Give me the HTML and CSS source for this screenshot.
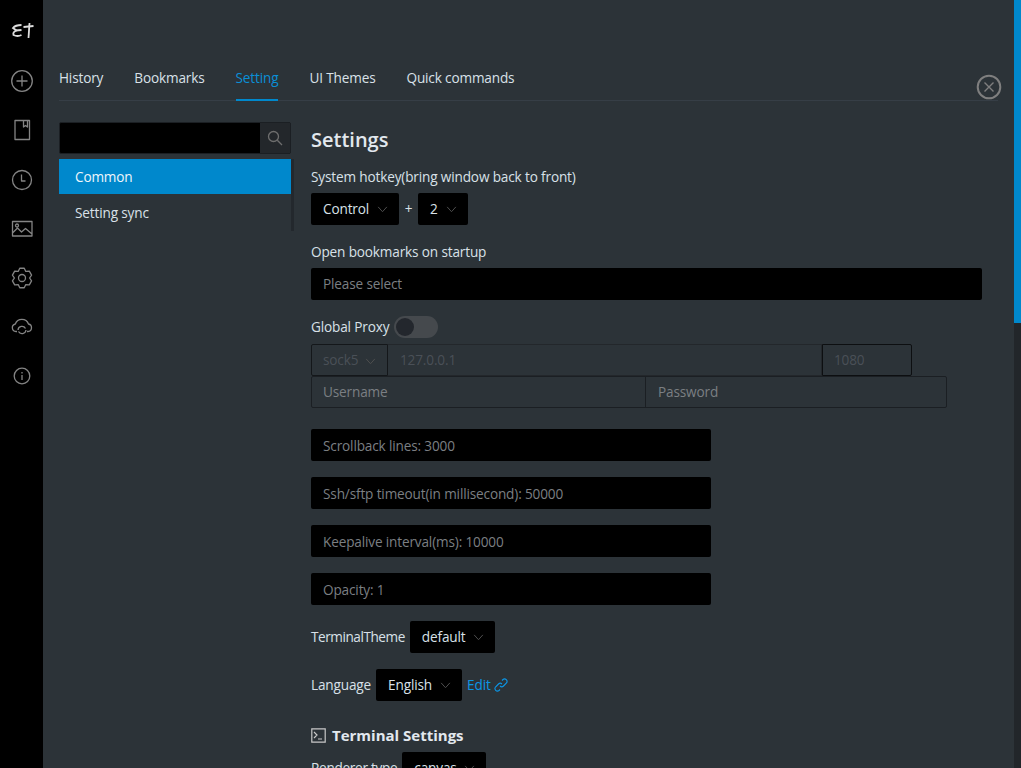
FILE: index.html
```html
<!DOCTYPE html>
<html lang="en">
<head>
<meta charset="utf-8">
<title>Settings</title>
<link rel="stylesheet" href="styles.css">
</head>
<body>
<div class="app">
  <nav class="rail">
    <div class="logo">
      <svg width="24" height="20" viewBox="0 1 24 20" fill="none" stroke="#ddd" stroke-width="1.800"><path d="M11.500 4Q5.500 4 3 7L6.500 9.500Q2.500 11 3.500 14Q7.500 16 11.500 14"/><path d="M5.500 9.500 11.500 9"/><path d="M13.500 6 23.500 5"/><path d="M19.500 2 18.500 17"/></svg>
    </div>
    <div class="rail-item"><svg width="24" height="24" viewBox="0 0 24 24" class="ico"><circle cx="12" cy="12" r="10.300"/><path d="M12 6.500v11M6.500 12h11"/></svg></div>
    <div class="rail-item"><svg width="18" height="22" viewBox="0 0 18 22" class="ico"><path d="M2 1.500h14.500v19H2zM10.500 1.500v6.500l2-1.500 2 1.500V1.500"/></svg></div>
    <div class="rail-item clock"><svg width="22" height="22" viewBox="0 0 22 22" class="ico"><circle cx="11" cy="11" r="9.500"/><path d="M10.500 5.500v6.500h4"/></svg></div>
    <div class="rail-item"><svg width="22" height="18" viewBox="0 0 22 18" class="ico"><path d="M1.500 1.500h19.500v14.500H1.500zM1.500 13l5-5 4 4 4-3.500 6.500 5.500"/><circle cx="6" cy="5.500" r="1.500"/></svg></div>
    <div class="rail-item"><svg width="22" height="22" viewBox="0 0 22 22" class="ico"><circle cx="11" cy="11" r="3.500"/><path d="M8.750 1.260H13.250L14.800 4.420 18.310 4.180 20.560 8.080 18.600 11 20.560 13.920 18.310 17.820 14.800 17.580 13.250 20.740H8.750L7.200 17.580 3.690 17.820 1.440 13.920 3.400 11 1.440 8.080 3.690 4.180 7.200 4.420Z"/></svg></div>
    <div class="rail-item"><svg width="22" height="18" viewBox="0 0 22 18" class="ico"><path d="M6 13.500H5a3.800 3.800 0 0 1-.7-7.500A7 7 0 0 1 17.500 6a3.800 3.800 0 0 1-.5 7.500h-1"/><path d="M7 12a4 4 0 0 1 7.500-1.500M15 12a4 4 0 0 1-7.500 1.500"/></svg></div>
    <div class="rail-item"><svg width="18" height="18" viewBox="0 0 18 18" class="ico"><circle cx="9" cy="9" r="7.800"/><path d="M9 8v5M9 5v1.500"/></svg></div>
  </nav>

  <main class="main">
    <header class="tabs">
      <span class="tab">History</span>
      <span class="tab">Bookmarks</span>
      <span class="tab active">Setting</span>
      <span class="tab">UI Themes</span>
      <span class="tab">Quick commands</span>
    </header>
    <svg class="close" width="26" height="26" viewBox="0 0 26 26"><circle cx="13" cy="13" r="11.300"/><path class="close-x" d="m8.500 8.500 9 9M17.500 8.500l-9 9"/></svg>

    <div class="body">
      <aside class="side">
        <div class="search">
          <span class="search-input"></span>
          <span class="search-btn"><svg width="16" height="16" viewBox="0 0 16 16"><circle cx="6.500" cy="6.500" r="5"/><path d="m10.300 10.300 4.700 4.700"/></svg></span>
        </div>
        <ul class="menu">
          <li class="menu-item selected">Common</li>
          <li class="menu-item">Setting sync</li>
        </ul>
      </aside>

      <section class="content">
        <h2 class="title">Settings</h2>
        <div class="label">System hotkey(bring window back to front)</div>
        <div class="row hotkey">
          <span class="select w88">Control<svg class="chev" viewBox="0 0 12 8"><path d="m1 1 5 5.500L11 1"/></svg></span>
          <span class="plus">+</span>
          <span class="select w50">2<svg class="chev" viewBox="0 0 12 8"><path d="m1 1 5 5.500L11 1"/></svg></span>
        </div>
        <div class="label bm">Open bookmarks on startup</div>
        <div class="field full placeholder">Please select</div>

        <div class="proxy-head">
          <span>Global Proxy</span>
          <span class="switch"><span class="knob"></span></span>
        </div>
        <div class="proxy-line">
          <span class="pcell proto">sock5<svg class="chev" viewBox="0 0 12 8"><path d="m1 1 5 5.500L11 1"/></svg></span>
          <span class="pcell host">127.0.0.1</span>
          <span class="pcell port">1080</span>
        </div>
        <div class="proxy-auth">
          <span class="acell user">Username</span>
          <span class="acell pass">Password</span>
        </div>

        <div class="stack">
          <div class="field num">Scrollback lines: 3000</div>
          <div class="field num">Ssh/sftp timeout(in millisecond): 50000</div>
          <div class="field num">Keepalive interval(ms): 10000</div>
          <div class="field num">Opacity: 1</div>
        </div>

        <div class="row inline">
          <span class="tight">TerminalTheme</span>
          <span class="select w85">default<svg class="chev" viewBox="0 0 12 8"><path d="m1 1 5 5.500L11 1"/></svg></span>
        </div>
        <div class="row inline">
          <span>Language</span>
          <span class="select w86">English<svg class="chev" viewBox="0 0 12 8"><path d="m1 1 5 5.500L11 1"/></svg></span>
          <span class="edit">Edit <svg width="14" height="14" viewBox="0 0 14 14"><path d="M6 8a2.500 2.500 0 0 0 3.500 0l3-3a2.500 2.500 0 0 0-3.500-3.500L8 2.500"/><path d="M8 6a2.500 2.500 0 0 0-3.500 0l-3 3A2.500 2.500 0 0 0 5 12.500l1-1"/></svg></span>
        </div>

        <h3 class="sub"><svg width="15" height="15" viewBox="0 0 15 15"><path d="M.8.800h13.400v13.400H.8zM3 4l3 3-3 3M7 11h4"/></svg>Terminal Settings</h3>
        <div class="row inline last">
          <span class="tight2">Renderer type</span>
          <span class="select w84">canvas<svg class="chev" viewBox="0 0 12 8"><path d="m1 1 5 5.500L11 1"/></svg></span>
        </div>
      </section>
    </div>
  </main>

  <div class="scrollbar"><div class="thumb"></div></div>
</div>
</body>
</html>
```
FILE: styles.css
```css
* { box-sizing: border-box; }
html, body { margin: 0; height: 100%; overflow: hidden; }
body {
  font: 13.600px/22px "Open Sans", "Noto Sans", sans-serif;
  letter-spacing: -0.150px;
  color: #d9e1e8;
  background: #2c3338;
}
.app { display: flex; height: 768px; overflow: hidden; }

.rail {
  width: 43px;
  flex: none;
  background: #000;
  padding-top: 7.200px;
  display: flex;
  flex-direction: column;
}
.logo, .rail-item {
  height: 49.200px;
  display: flex;
  align-items: center;
  justify-content: center;
  flex: none;
}
.clock svg { margin-top: 2px; }
.ico { fill: none; stroke: #848484; stroke-width: 1.300; stroke-linejoin: round; }

.main { flex: 1; min-width: 0; position: relative; padding: 62px 16px 0; }
.tabs {
  display: flex;
  gap: 31px;
  height: 39px;
  border-bottom: 1px solid #363e46;
}
.tab { height: 39px; padding-top: 5px; color: #d9e1e8; }
.tab.active { color: #0a8fd6; border-bottom: 2px solid #0088cc; }
.close { position: absolute; left: 933px; top: 74px; fill: none; stroke: #7f7f7f; stroke-width: 2; }
.close .close-x { stroke-width: 1.400; }

.body { display: flex; margin-top: 21px; }
.side { width: 232px; flex: none; margin-right: 20px; }
.search {
  display: flex;
  height: 32px;
  background: #000;
  border: 1px solid #1b1f23;
  border-radius: 2px;
}
.search-input { flex: 1; }
.search-btn {
  width: 30px;
  background: #23272b;
  display: flex;
  align-items: center;
  justify-content: center;
}
.search-btn svg { fill: none; stroke: #6e6e6e; stroke-width: 1.300; }
.menu {
  list-style: none;
  margin: 5px 0 0;
  padding: 0;
  width: 235px;
  border-right: 3px solid #23282d;
  height: 72px;
}
.menu-item { height: 37px; line-height: 38px; padding-left: 16px; }
.menu-item.selected { background: #0088cc; height: 35px; line-height: 35px; color: #eef6fb; }

.content { flex: 1; min-width: 0; }
.title { margin: 0; font-size: 20px; font-weight: 600; line-height: 36px; letter-spacing: 0; color: #e2e8ee; }
.label { margin-top: 8px; height: 22px; }
.row { display: flex; align-items: center; }
.hotkey { margin-top: 5px; }
.select {
  height: 32px;
  background: #000;
  border-radius: 2px;
  padding-left: 12px;
  display: inline-flex;
  align-items: center;
  color: #d9e1e8;
  position: relative;
  flex: none;
}
.chev { width: 11px; height: 7px; position: absolute; right: 11px; top: 13px; fill: none; stroke: #505050; stroke-width: 1.100; }
.w88 { width: 88px; }
.w50 { width: 50px; }
.w85 { width: 85px; }
.w86 { width: 86px; }
.w84 { width: 84px; }
.plus { width: 19px; text-align: center; }
.bm { margin-top: 16px; }
.field {
  height: 32px;
  background: #000;
  border-radius: 2px;
  padding-left: 12px;
  line-height: 32px;
  color: #7b7f83;
}
.num { padding-top: 1px; }
.full { width: 671px; margin-top: 5px; }
.proxy-head { display: flex; align-items: center; gap: 5px; margin-top: 16px; height: 22px; }
.switch { width: 44px; height: 22px; border-radius: 11px; background: #45494d; padding: 2px; display: block; }
.knob { display: block; width: 18px; height: 18px; border-radius: 50%; background: #23272d; }
.proxy-line { display: flex; height: 32px; margin-top: 6px; width: 601px; }
.pcell { height: 32px; line-height: 30px; padding-left: 11px; color: #4a5057; border: 1px solid #23272b; position: relative; }
.proto { width: 77px; border-color: #14171a; border-radius: 2px 0 0 2px; }
.host { flex: 1; border-left: 0; padding-left: 12px; }
.port { width: 90px; border-color: #0d0f11; border-radius: 0 2px 2px 0; }
.proxy-auth { display: flex; width: 636px; height: 32px; border: 1px solid #1b1f23; border-radius: 2px; }
.acell { line-height: 30px; padding-left: 11px; color: #7b7f83; }
.user { width: 333px; }
.pass { flex: 1; border-left: 1px solid #1b1f23; padding-left: 12px; }
.stack { margin-top: 21px; display: flex; flex-direction: column; gap: 16px; width: 400px; }
.inline { margin-top: 16px; gap: 5px; height: 32px; }
.tight { letter-spacing: -0.450px; }
.tight2 { letter-spacing: -0.300px; }
.edit { color: #0b96e6; }
.edit svg { fill: none; stroke: #0b96e6; stroke-width: 1.100; vertical-align: -2px; }
.sub { margin: 18px 0 0; font-size: 15px; font-weight: 700; line-height: 32px; height: 32px; letter-spacing: 0; display: flex; align-items: center; gap: 6px; color: #e2e8ee; }
.sub svg { fill: none; stroke: #c8c8c8; stroke-width: 1.200; flex: none; }
.last { margin-top: 1px; }

.scrollbar { width: 7px; flex: none; background: #22262a; }
.thumb { height: 323px; background: #0088cc; }
```
